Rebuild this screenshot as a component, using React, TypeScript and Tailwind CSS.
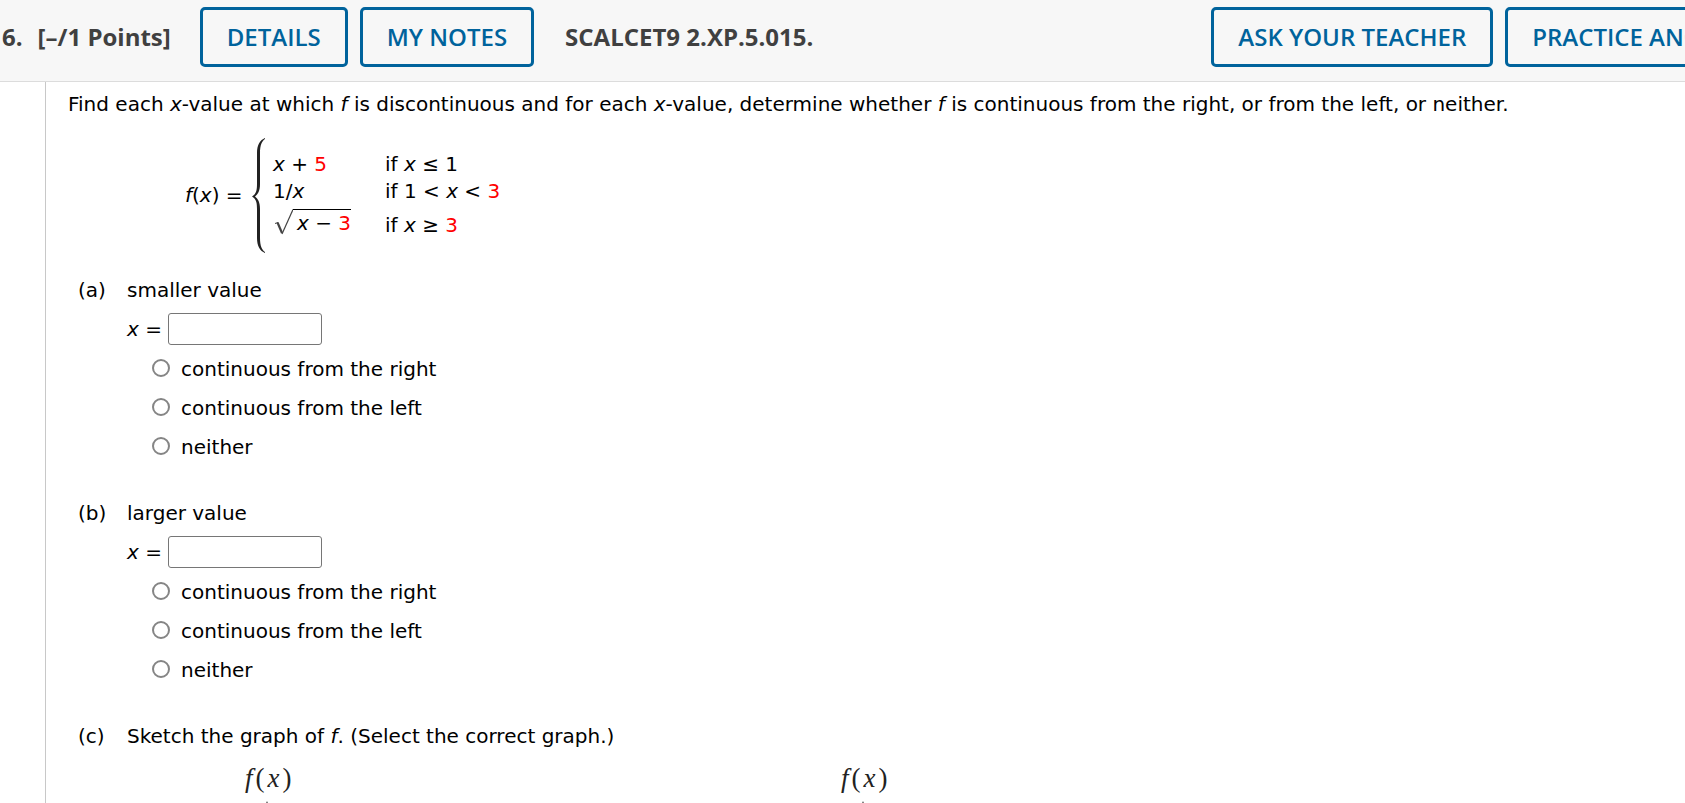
import React from "react";

const BUTTON =
  "h-[60px] shrink-0 whitespace-nowrap rounded-[5px] border-[3px] border-[#00639c] px-6 text-2xl font-semibold text-[#00639c]";

const CHOICES = ["continuous from the right", "continuous from the left", "neither"];

const Red: React.FC<{ children: React.ReactNode }> = ({ children }) => <span className="text-[#ff0000]">{children}</span>;

const Header: React.FC = () => (
  <header className="flex h-[82px] items-start overflow-hidden border-b border-[#dcdcdc] bg-[#f7f7f7] pt-[7px] font-['Open_Sans',sans-serif] text-2xl text-[#404040]">
    <h2 className="flex h-[60px] shrink-0 items-center gap-[15px] whitespace-nowrap pl-[2px] font-bold">
      <span>6.</span>
      <span>[–/1 Points]</span>
    </h2>
    <div className="ml-[29px] flex gap-3">
      <button type="button" className={BUTTON}>DETAILS</button>
      <button type="button" className={BUTTON}>MY NOTES</button>
    </div>
    <span className="ml-[31px] flex h-[60px] shrink-0 items-center whitespace-nowrap font-bold">SCALCET9 2.XP.5.015.</span>
    <div className="-mr-[105px] ml-auto flex gap-3">
      <button type="button" className={BUTTON}>ASK YOUR TEACHER</button>
      <button type="button" className={BUTTON}>PRACTICE ANOTHER</button>
    </div>
  </header>
);

const Formula: React.FC = () => (
  <div className="mt-[21px] ml-[117px] flex items-center">
    <span className="w-[67px] whitespace-nowrap"><i>f</i>(<i>x</i>) =</span>
    <svg className="h-[116px] w-[13px]" viewBox="0 0 13 116" aria-hidden="true">
      <path
        d="M13 1C8 3 5 8 5 16V47C5 54 4 57 0 59.500C4 62 5 65 5 72V101C5 109 8 114 13 116V115C10 113 8 109 8 101V72C8 65 6 62 3 59.500C6 57 8 54 8 47V16C8 8 10 4 13 2Z"
        fill="#222"
      />
    </svg>
    <div className="ml-2 grid grid-cols-[112px_auto] leading-[27px]">
      <span><i>x</i> + <Red>5</Red></span>
      <span>if <i>x</i> ≤ 1</span>
      <span>1/<i>x</i></span>
      <span>if 1 &lt; <i>x</i> &lt; <Red>3</Red></span>
      <span className="flex items-start pt-1">
        <svg className="h-[27px] w-5" viewBox="0 0 20 27" fill="none" stroke="#444" aria-hidden="true">
          <path d="M2 14.500L5 13.500" />
          <path d="M4.500 13.500L9 24" strokeWidth="2.2" />
          <path d="M9 25L20 0.500" strokeWidth="1.200" />
        </svg>
        <span className="border-t border-black pl-1"><i>x</i> − <Red>3</Red></span>
      </span>
      <span className="pt-[7px]">if <i>x</i> ≥ <Red>3</Red></span>
    </div>
  </div>
);

const Part: React.FC<{ id: string; title: string }> = ({ id, title }) => (
  <section className="flex h-[223px]">
    <span className="w-[49px] shrink-0">({id})</span>
    <div>
      <h3>{title}</h3>
      <div className="mt-[11px] flex h-8 items-center">
        <label htmlFor={`x-${id}`} className="w-[41px]"><i>x</i> =</label>
        <input id={`x-${id}`} type="text" className="h-8 w-[154px] rounded-[3px] border border-[#767676] bg-white px-1" />
      </div>
      <div className="mt-3 ml-[25px] flex flex-col gap-[15px]">
        {CHOICES.map((choice) => (
          <label key={choice} className="flex items-start gap-[11px]">
            <input type="radio" name={`side-${id}`} className="mt-[2px] h-[18px] w-[18px] appearance-none rounded-full border-2 border-[#858585] bg-white checked:border-[6px]" />
            {choice}
          </label>
        ))}
      </div>
    </div>
  </section>
);

// only the axis label and the tip of the y-axis arrow reach into view
const GraphTop: React.FC = () => (
  <div className="flex w-[596px] flex-col">
    <span className="flex gap-[3px] font-['Liberation_Serif',serif] text-[27px] leading-8 text-[#222]">
      <i>f</i>
      <span>(</span>
      <i>x</i>
      <span>)</span>
    </span>
    <svg className="mt-[7px] ml-5 h-5 w-1" viewBox="0 0 4 20" aria-hidden="true">
      <path d="M2 0L4 5H0Z" fill="#333" />
    </svg>
  </div>
);

export default function App() {
  return (
    <div className="h-screen overflow-hidden bg-white font-['DejaVu_Sans',sans-serif] text-xl leading-6 text-black">
      <Header />
      <main className="ml-[45px] min-h-full border-l border-[#c8c8c8] pt-[10px] pl-[22px] leading-6">
        <p className="whitespace-nowrap">
          Find each <i>x</i>-value at which <i>f</i> is discontinuous and for each <i>x</i>-value, determine whether <i>f</i> is continuous from the right, or from the left, or neither.
        </p>
        <Formula />
        <div className="mt-[25px] ml-[10px]">
          <Part id="a" title="smaller value" />
          <Part id="b" title="larger value" />
          <section className="flex">
            <span className="w-[49px] shrink-0">(c)</span>
            <h3>Sketch the graph of <i>f</i>. (Select the correct graph.)</h3>
          </section>
          <div className="mt-[14px] ml-[167px] flex">
            <GraphTop />
            <GraphTop />
          </div>
        </div>
      </main>
    </div>
  );
}
